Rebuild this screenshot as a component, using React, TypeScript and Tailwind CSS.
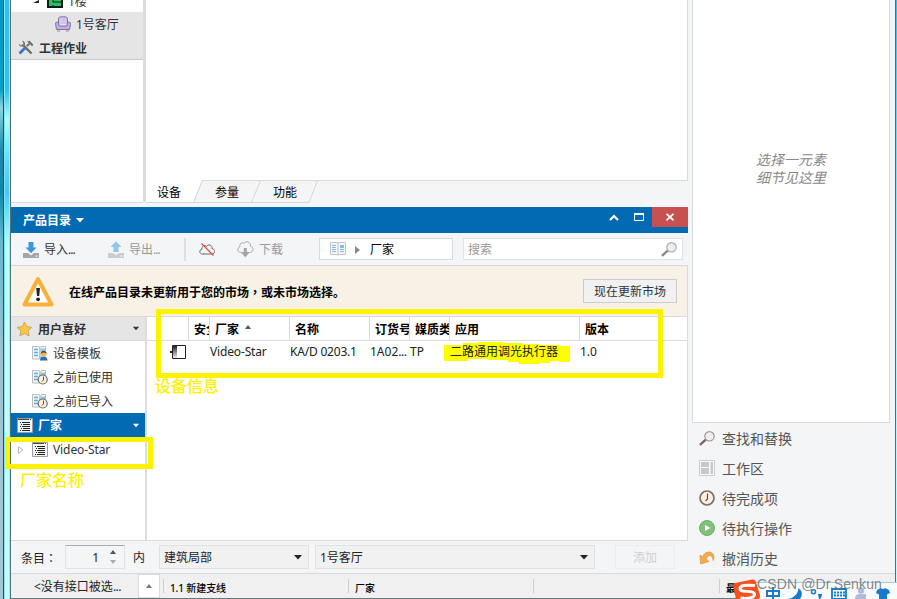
import React from 'react';

type P = { className?: string };

const Tri = ({ className = '' }: P) => (
  <svg width="8" height="5" viewBox="0 0 8 5" className={`shrink-0 ${className}`}>
    <path d="M0 0h8L4 4.6z" fill="currentColor" />
  </svg>
);

const Armchair = () => (
  <svg width="16" height="16" viewBox="0 0 16 16" className="shrink-0">
    <path d="M3.500 8V3Q3.500 .8 6 .8h4Q12.500 .8 12.500 3v5" fill="#cfc5ea" stroke="#8370ad" />
    <path d="M1.500 6Q.3 6.500.6 8.500L1.500 13.500h13l.9-5Q15.700 6.500 14.500 6q-2-.5-2.300 2L12 10H4l-.2-2Q3.500 5.500 1.500 6z" fill="#bfb2e0" stroke="#8370ad" />
    <path d="M2 14.500h3v1H2zM11 14.500h3v1h-3z" fill="#b98a63" />
  </svg>
);

const Tools = () => (
  <svg width="16" height="15" viewBox="0 0 16 15" className="shrink-0">
    <path d="M5 5l8.500 8.500" stroke="#6b6b6b" strokeWidth="2.400" />
    <path d="M.8 3.500L3 5.500 5.500 3.500 4 .8Q7.500 1 7 5L4.500 6.800Q1 6.800.8 3.500z" fill="#777" />
    <path d="M8.800 6.200L12 3" stroke="#777" strokeWidth="2" />
    <path d="M9 1.500L11.500.7l3.800 3.800-1.200 2L12 4z" fill="#6b6b6b" />
    <path d="M1.500 13.500L7 8" stroke="#3c78c4" strokeWidth="2.800" />
  </svg>
);

const Tray = ({ up = false }: { up?: boolean }) => (
  <svg width="16" height="17" viewBox="0 0 16 17" className={up ? 'shrink-0 opacity-50' : 'shrink-0'}>
    <path d="M0 12h5l3 2.500 3-2.500h5v5H0z" fill="#a5a5a5" />
    <path d="M12.500 14.500h2v1h-2z" fill="#fff" />
    {up ? <path d="M5.500 11V6H2.500L8 .3 13.500 6h-3v5z" fill="#3c96dc" /> : <path d="M5.500 1v5.500h-3L8 12.200l5.500-5.700h-3V1z" fill="#3c96dc" />}
  </svg>
);

const cloudPath = 'M4.500 12H3.500C.2 12-.2 7.800 3 7.200 2.500 3.500 6.500 2.500 7.500 4.500 9 1.500 13.500 3 13 6.700 16.500 7 16.300 12 13 12h-1.500';

const CloudOff = () => (
  <svg width="17" height="15" viewBox="0 0 17 15" className="shrink-0">
    <path d={cloudPath + 'H4'} fill="none" stroke="#666" />
    <path d="M2.500 1.500l12 12" stroke="#e64b42" strokeWidth="1.300" />
  </svg>
);

const CloudDown = () => (
  <svg width="17" height="17" viewBox="0 1 17 17" className="shrink-0">
    <path d="M4 12.500H3.500C.2 12.500-.2 7.300 3 6.700 2.500 2.500 5.500 2 7 3.500 8.500.5 14 1.500 13.500 6.200 17 6.500 16.800 12.500 13 12.500" fill="none" stroke="#aaa" />
    <path d="M6.800 8h3v4h3.200L8.300 17.300 3.600 12h3.200z" fill="#a5a5a5" />
  </svg>
);

const Book = () => (
  <svg width="16" height="14" viewBox="0 0 16 14" className="shrink-0">
    <path d="M.5.5h7L8 1.500l.5-1h7v12h-7l-.5 1-.5-1h-7z" fill="#f5f5f5" stroke="#c5c5c5" />
    <path d="M8 1v12" stroke="#c5c5c5" />
    <path d="M2 3.500h4M2 5.500h4M2 7.500h4M2 9.500h4M10 7.500h4M10 9.500h4" stroke="#79bfe9" />
    <path d="M10 3h4v3h-4z" fill="#79bfe9" />
  </svg>
);

const Lens = ({ brown = false }: { brown?: boolean }) => (
  <svg width="16" height="15" viewBox="0 0 16 15" className="shrink-0">
    <path d="M1 13.800L7 8.300" stroke={brown ? '#80695b' : '#8a8a8a'} strokeWidth="2.400" />
    <circle cx="10.500" cy="5.300" r="4.700" fill="#eceef0" stroke={brown ? '#a39891' : '#aaa'} strokeWidth="1.200" />
  </svg>
);

const Warning = () => (
  <svg width="32" height="31" viewBox="0 0 32 31" className="shrink-0">
    <path d="M16 3L29.500 28.500H2.500z" fill="#fff" stroke="#fbb03b" strokeWidth="4" strokeLinejoin="round" />
    <path d="M14.200 12h3.800l-.8 8h-2.200z" fill="#222" />
    <circle cx="16.100" cy="23.300" r="1.900" fill="#222" />
  </svg>
);

const Star = () => (
  <svg width="17" height="16" viewBox="0 0 17 16" className="shrink-0">
    <path d="M8.500 1l2.200 4.700 5.200.6-3.800 3.600 1 5.100-4.600-2.500L3.900 15l1-5.100L1.100 6.300l5.200-.6z" fill="#fcc644" stroke="#c9a15a" strokeWidth=".9" strokeLinejoin="round" />
  </svg>
);

const BookBase = () => (
  <>
    <path d="M.5.5h6L8 1.500l-.5 11.500H.5zM8 1.500L9 .5h4.500V7L8 12z" fill="#f3f5f7" stroke="#b6bcc2" />
    <path d="M2 3.500h4M2 6.500h4M2 9.500h4" stroke="#5baee0" strokeWidth="1.500" />
    <path d="M9 2.500h4V6H9z" fill="#8cc9ec" />
  </>
);

const BookUser = () => (
  <svg width="16" height="15" viewBox="0 0 16 15" className="shrink-0">
    <BookBase />
    <path d="M8 14.500q0-4 3.700-4t3.800 4z" fill="#2a6fb5" />
    <circle cx="11.700" cy="8.300" r="2.800" fill="#f0b95c" />
    <path d="M8.700 8q.3-3 3-3t3 3q-1-1.400-3-1.400t-3 1.400z" fill="#333" />
  </svg>
);

const BookClock = () => (
  <svg width="16" height="15" viewBox="0 0 16 15" className="shrink-0">
    <BookBase />
    <circle cx="10.700" cy="9.500" r="4.500" fill="#fbefdf" stroke="#75675e" strokeWidth="1.200" />
    <path d="M11.500 6.500v3.500l-1.500 1.500" fill="none" stroke="#555" />
  </svg>
);

const ListIcon = () => (
  <svg width="16" height="15" viewBox="0 0 16 15" className="shrink-0">
    <path d="M.5.5h15v14H.5z" fill="#f4f4f5" stroke="#9a9fa6" />
    <path d="M1 1.500h11M13 1.500h1" stroke="#444" />
    <path d="M3 4.500h1M5 4.500h8M4 6.500h1M6 6.500h7M3 8.500h1M5 8.500h8M4 10.500h1M6 10.500h7M3 12.500h1M5 12.500h8" stroke="#222" />
  </svg>
);

const Dimmer = () => (
  <svg width="16" height="14" viewBox="0 0 16 14" className="shrink-0">
    <defs>
      <linearGradient id="dim" x1="0" y1="0" x2="0" y2="1"><stop stopColor="#222" /><stop offset="1" stopColor="#eee" /></linearGradient>
    </defs>
    <path d="M2.500.5h13v13h-13z" fill="#fff" stroke="#222" />
    <path d="M3 1h4v12H3z" fill="url(#dim)" />
    <path d="M0 6h2v2H0z" fill="#222" />
  </svg>
);

const Layout = () => (
  <svg width="16" height="16" viewBox="0 0 16 16" className="shrink-0">
    <path d="M.5.5h15v15H.5z" fill="#fafafa" stroke="#ccc" />
    <path d="M2 2h8v5H2zM2 8h8v6H2zM11.500 2H14v12h-2.500z" fill="#c8c8c8" />
  </svg>
);

const Clock = () => (
  <svg width="16" height="16" viewBox="0 0 16 16" className="shrink-0">
    <circle cx="8" cy="8" r="7" fill="#fdf0df" stroke="#7f6f64" strokeWidth="1.700" />
    <path d="M8.500 3.500v5.500L6.500 11" fill="none" stroke="#555" strokeWidth="1.200" />
  </svg>
);

const Play = () => (
  <svg width="16" height="16" viewBox="0 0 16 16" className="shrink-0">
    <circle cx="8" cy="8" r="7.500" fill="#80c078" stroke="#70ad6a" />
    <path d="M6 5l5.500 3L6 11z" fill="#fff" />
  </svg>
);

const Undo = () => (
  <svg width="16" height="15" viewBox="0 0 16 15" className="shrink-0">
    <path d="M1 4l2.500 2Q5.500 1 10 1q5 .5 5 6l-.8 2.500Q13.500 4.500 10.500 4.500 8 4.700 7.300 8.300L10 10.500 1.500 13z" fill="#f5ad4c" stroke="#d79039" strokeWidth=".7" />
  </svg>
);

const TabLabel = ({ children, w }: { children: React.ReactNode; w: string }) => (
  <div className={`relative h-6 ${w} shrink-0 flex items-center justify-center text-black`}>{children}</div>
);

const Col = ({ w, children }: { w: string; children?: React.ReactNode }) => (
  <div className={`${w} pl-[5px] pt-0.5 h-full shrink-0 overflow-hidden whitespace-nowrap border-r border-[#d9dadc] flex items-center gap-1.5 font-bold text-black`}>{children}</div>
);

const SideRow = ({ icon, label }: { icon: React.ReactNode; label: string }) => (
  <div className="h-6 flex items-center pl-[21px] gap-[5px] text-[#333]">{icon}<span className="mt-0.5">{label}</span></div>
);

const Tool = ({ icon, label }: { icon: React.ReactNode; label: string }) => (
  <div className="h-[30px] flex items-center gap-[7px]">{icon}<span className="mt-px">{label}</span></div>
);

const VLine = ({ className = '' }: P) => <div className={`w-px h-[14px] shrink-0 bg-[#cfcfcf] ${className}`} />;

export default function App() {
  return (
    <div className="relative w-[897px] h-[599px] overflow-hidden flex bg-[#f4f5f7] text-[12px] leading-[16px] whitespace-nowrap text-[#333] font-['Noto_Sans','Noto_Sans_CJK_SC',sans-serif]">
      <div className="w-[11px] shrink-0 flex">
        <div className="w-[3px] bg-[linear-gradient(#0795c5_0%,#079fc5_15%,#8bd4df_18%,#2089b0_25%,#0e86b1_32%,#68b5d0_40%,#a4bfd1_60%,#a7c5d7_100%)]" />
        <div className="w-px bg-[#1c5363]" />
        <div className="w-px bg-[#83e6f8]" />
        <div className="w-[4px] bg-[linear-gradient(#2fc1ff_0%,#2fc1ff_15%,#b4fcff_20%,#62e0ff_26%,#3fc8fa_32%,#bffcff_41%,#c5fbfd_100%)]" />
        <div className="w-px bg-[#a3eaf4]" />
        <div className="w-px bg-[#4e7079]" />
      </div>

      <div className="w-[884px] shrink-0 flex flex-col">
        <div className="h-[573px] shrink-0 flex">
          <div className="w-[677px] shrink-0 flex flex-col">
            <div className="h-[207px] shrink-0 flex">
              <div className="w-[132px] h-[203px] shrink-0 overflow-hidden bg-white border-b border-[#d9dadc]">
                <div className="h-3 flex items-end pl-[21px]">
                  <svg width="7" height="12" viewBox="0 0 7 12" className="mr-2"><path d="M7 0v3H1z" fill="#222" /></svg>
                  <svg width="16" height="12" viewBox="0 0 16 12"><path d="M1-4h14V7H1z" fill="#31bd59" stroke="#101820" strokeWidth="2" /><path d="M6-3v5h9M6 5v3" fill="none" stroke="#123" /></svg>
                  <span className="ml-[5px] h-[18px] leading-[16px]">1楼</span>
                </div>
                <div className="bg-[#e5e5e5] border-b border-[#c9c9c9]">
                  <div className="h-6 flex items-center gap-[5px] pl-11"><Armchair /><span className="mt-0.5">1号客厅</span></div>
                  <div className="h-[23px] flex items-center gap-[5px] pl-[7px] font-bold"><Tools /><span className="mt-0.5">工程作业</span></div>
                </div>
              </div>
              <div className="w-[3px] h-[202px] shrink-0 bg-[#dcdcdc]" />
              <div className="w-[542px] shrink-0 flex flex-col">
                <div className="h-[181px] shrink-0 bg-white border-r border-b border-[#d9dadc]" />
                <div className="relative h-[23px] flex">
                  <svg width="200" height="23" className="absolute left-0 -top-px">
                    <path d="M0 0H56L47 22H0z" fill="#fff" />
                    <path d="M0 22.500H163L171.500.5M56.500.5L47.500 22.500M114.500.5L105.500 22.500" fill="none" stroke="#d5d7d9" />
                  </svg>
                  <TabLabel w="w-[46px]">设备</TabLabel>
                  <TabLabel w="w-[70px]">参量</TabLabel>
                  <TabLabel w="w-[46px]">功能</TabLabel>
                </div>
              </div>
            </div>

            <div className="h-[26px] shrink-0 bg-[#006ab3] text-white flex items-center pl-3">
              <span className="mt-0.5 font-bold">产品目录</span><Tri className="ml-[5px]" />
              <div className="ml-auto h-full flex items-start">
                <svg width="12" height="20" viewBox="0 0 12 20"><path d="M2 13l4-4 4 4" fill="none" stroke="#fff" strokeWidth="2.200" /></svg>
                <svg width="10" height="20" viewBox="0 0 10 20" className="ml-3.5"><path d="M.5 6.500h9v7h-9z" fill="none" stroke="#fff" /><path d="M0 6h10v2H0z" fill="#fff" /></svg>
                <div className="ml-2 w-9 h-5 bg-[#c75050] flex items-center justify-center">
                  <svg width="8" height="8" viewBox="0 0 8 8"><path d="M.5.8l7 6.500M7.500.8l-7 6.500" stroke="#fff" strokeWidth="1.700" /></svg>
                </div>
              </div>
            </div>

            <div className="h-8 shrink-0 flex items-center pl-3 text-[#999]">
              <div className="w-[85px] flex items-center gap-[5px] text-[#333]"><Tray /><span className="mt-0.5">导入<span className="tracking-[-1px]">...</span></span></div>
              <div className="w-[76px] flex items-center gap-[5px]"><Tray up /><span className="mt-0.5">导出<span className="tracking-[-1px]">...</span></span></div>
              <div className="w-0.5 h-[23px] bg-[#dfe0e2]" />
              <div className="ml-[13px] w-[38px]"><CloudOff /></div>
              <div className="w-[82px] flex items-center gap-[5px]"><CloudDown /><span className="mt-0.5">下载</span></div>
              <div className="w-[134px] h-[22px] shrink-0 bg-white border border-[#d9dadc] flex items-center pl-2.5 text-black">
                <Book />
                <svg width="5" height="8" viewBox="0 0 5 8" className="ml-[9px] mr-2.5 mt-0.5"><path d="M0 0l5 4-5 4z" fill="#888" /></svg>
                <span className="mt-0.5">厂家</span>
              </div>
              <div className="ml-2.5 w-[220px] h-[22px] shrink-0 bg-white border border-[#e2e3e5] flex items-center justify-between pl-1 pr-[5px]">
                <span className="mt-0.5">搜索</span><Lens />
              </div>
            </div>

            <div className="h-[52px] shrink-0 bg-[#f7f2e5] border border-l-0 border-[#d9dadc] flex items-center pl-[11px] pr-2.5">
              <Warning />
              <span className="mt-0.5 ml-[15px] font-bold text-black">在线产品目录未更新用于您的市场<span className="font-['Noto_Sans_CJK_TC']">，</span>或未市场选择。</span>
              <div className="ml-auto w-[94px] h-6 pt-0.5 bg-[#f1f1f1] border border-[#cbcccd] flex items-center justify-center">现在更新市场</div>
            </div>

            <div className="h-[224px] shrink-0 flex border-b border-[#d9dadc]">
              <div className="w-[134px] shrink-0 bg-white">
                <div className="h-[24px] bg-[#e5e5e5] border-b border-[#d9dadc] flex items-center pl-[5px] gap-1">
                  <Star /><span className="mt-0.5 ml-px font-bold">用户喜好</span><Tri className="ml-auto mr-[5px] scale-[0.85] text-[#333]" />
                </div>
                <SideRow icon={<BookUser />} label="设备模板" />
                <SideRow icon={<BookClock />} label="之前已使用" />
                <SideRow icon={<BookClock />} label="之前已导入" />
                <div className="h-6 bg-[#006ab3] text-white flex items-center pl-1.5 gap-[5px]">
                  <ListIcon /><span className="mt-0.5 font-bold">厂家</span><Tri className="ml-auto mr-[5px] scale-[0.85]" />
                </div>
                <div className="h-[25px] flex items-center pl-[7px]">
                  <svg width="6" height="8" viewBox="0 0 6 8"><path d="M.5.7L5 4 .5 7.300z" fill="#fff" stroke="#b5b5b5" /></svg>
                  <span className="ml-2"><ListIcon /></span><span className="ml-[5px] tracking-[-0.1px]">Video-Star</span>
                </div>
              </div>
              <div className="w-0.5 shrink-0 bg-[#dcdde0]" />
              <div className="w-[541px] shrink-0 bg-white border-r border-[#d9dadc]">
                <div className="h-6 flex items-center border-b border-[#d9dadc]">
                  <Col w="w-[42px]" />
                  <Col w="w-[21px]">安全</Col>
                  <Col w="w-[80px]">厂家<svg width="6" height="4" viewBox="0 0 6 4" className="mb-1.5"><path d="M3 0l3 4H0z" fill="#555" /></svg></Col>
                  <Col w="w-[80px]">名称</Col>
                  <Col w="w-[40px]">订货号</Col>
                  <Col w="w-[40px]">媒质类型</Col>
                  <Col w="w-[130px]">应用</Col>
                  <div className="pl-[5px] pt-0.5 font-bold text-black">版本</div>
                </div>
                <div className="relative h-[21px] flex items-center text-[#222]">
                  <svg width="127" height="26" className="absolute left-[296px] -top-px">
                    <path d="M1 5H20V3H35V2H60V3H80V4H96V5H116V6H127V22H116V21H107V23H97V24H76V22H65V20H45V19H25V21H1z" fill="#ffff00" />
                  </svg>
                  <div className="w-[63px] pl-[23px]"><Dimmer /></div>
                  <div className="w-[80px] tracking-[-0.15px]">Video-Star</div>
                  <div className="w-[80px] tracking-[-0.2px]">KA/D 0203.1</div>
                  <div className="w-[40px]">1A02<span className="tracking-[-0.5px]">...</span></div>
                  <div className="w-[40px]">TP</div>
                  <div className="relative w-[130px] text-[#222]">二路通用调光执行器</div>
                  <div>1.0</div>
                </div>
              </div>
            </div>

            <div className="h-8 shrink-0 flex items-center pl-2.5 text-[#222]">
              <span className="mt-0.5 w-11">条目<span className="font-['Noto_Sans_CJK_TC']">：</span></span>
              <div className="w-[60px] h-6 border border-[#e2e3e5] border-t-[#a7a9ac] flex items-center justify-end pr-[7px]">
                <span className="mt-0.5">1</span>
                <svg width="8" height="14" viewBox="0 0 8 14" className="ml-2.5"><path d="M4 0l3 4H1z" fill="#555" /><path d="M1 10h6l-3 4z" fill="#aaa" /></svg>
              </div>
              <span className="mt-0.5 ml-2 w-[26px]">内</span>
              <div className="w-[150px] h-6 shrink-0 bg-[#f1f1f1] border border-[#e0e1e3] flex items-center justify-between pl-1 pr-1.5"><span className="mt-0.5">建筑局部</span><Tri /></div>
              <div className="ml-1.5 w-[280px] h-6 shrink-0 bg-[#f1f1f1] border border-[#e0e1e3] flex items-center justify-between pl-1 pr-1.5"><span className="mt-0.5">1号客厅</span><Tri /></div>
              <div className="ml-5 w-[60px] h-6 pt-0.5 shrink-0 border border-[#ebecee] text-[#cfcfcf] flex items-center justify-center">添加</div>
            </div>
          </div>

          <div className="w-[207px] shrink-0 flex flex-col">
            <div className="ml-1 w-[198px] h-[423px] shrink-0 bg-white border border-t-0 border-[#d9dadc] flex flex-col items-center pt-[151px] text-[14px] leading-[18px] italic text-[#888]">
              <span>选择一元素</span><span>细节见这里</span>
            </div>
            <div className="pl-[11px] text-[14px] text-[#555]">
              <Tool icon={<Lens brown />} label="查找和替换" />
              <Tool icon={<Layout />} label="工作区" />
              <Tool icon={<Clock />} label="待完成项" />
              <Tool icon={<Play />} label="待执行操作" />
              <Tool icon={<Undo />} label="撤消历史" />
            </div>
          </div>
        </div>

        <div className="h-[26px] shrink-0 bg-[#f0f0f0] border-t border-t-[#d9dadc] border-b border-b-[#68777c] flex items-center text-[10px] text-black">
          <span className="mt-0.5 w-[127px] pl-[23px] text-[12px] text-[#222]">&lt;没有接口被选<span className="tracking-[-0.5px]">...</span></span>
          <div className="w-[22px] h-6 shrink-0 bg-white border border-[#dcdcdc] flex items-center justify-center">
            <svg width="6" height="4" viewBox="0 0 6 4"><path d="M3 0l3 4H0z" fill="#777" /></svg>
          </div>
          <VLine className="ml-[3px]" />
          <span className="mt-1 w-[184px] pl-1.5 font-medium tracking-[-0.1px]">1.1 新建支线</span>
          <VLine />
          <span className="mt-1 w-[184px] pl-1.5 font-medium">厂家</span>
          <VLine />
          <VLine className="ml-[185px]" />
          <span className="mt-1 pl-1.5 font-bold">最后</span>
        </div>
      </div>
      <div className="w-px shrink-0 bg-[#47717d]" />
      <div className="w-px shrink-0 bg-[linear-gradient(#35bdf0,#a7f5ff_45%,#c8fbff)]" />

      <div className="absolute left-[156px] top-[309px] w-[507px] h-[69px] border-[5px] border-[#fff200]" />
      <div className="absolute left-[5px] top-[437px] w-[148px] h-[32px] border-[5px] border-[#fff200]" />
      <span className="absolute left-[155px] top-[378px] text-[16px] font-medium text-[#fff200]">设备信息</span>
      <span className="absolute left-[20px] top-[472px] text-[16px] font-medium text-[#fff200]">厂家名称</span>

      <div className="absolute left-[748px] top-[582px] w-[149px] h-[17px] bg-[#f7fbfe] border-t border-[#a9cbe0]" />
      <svg width="165" height="20" viewBox="732 579 165 20" className="absolute left-[732px] top-[579px]">
        <path d="M733 585.500q0-2 2-2.500L752.500 579.500q2.500-.3 3 1.500L760 595q.5 2-1 4H736z" fill="#f4511e" />
        <path d="M755 585.500q-15-1.500-15 3.200c0 4.300 14.500 1 14.500 5.600 0 4-8 4.700-14 3.700" fill="none" stroke="#fff" strokeWidth="3" />
        <path d="M767 591h12v5h-12zM773 587v12" fill="none" stroke="#1979ca" strokeWidth="2" />
        <path d="M798.500 588q6 5 1.500 11h-12q10-2 10.500-11z" fill="#1979ca" />
        <circle cx="813.500" cy="591.800" r="2" fill="none" stroke="#1979ca" strokeWidth="1.500" />
        <path d="M818 594h4q0 4-3 5.500z" fill="#1979ca" />
        <path d="M832 589h14v10h-14z" fill="none" stroke="#1979ca" strokeWidth="1.800" />
        <path d="M834 592.500h11M834 595.500h11" stroke="#1979ca" strokeWidth="1.800" strokeDasharray="2 1" />
        <circle cx="861" cy="590.500" r="3.200" fill="#b0bcd5" />
        <path d="M855 599q0-5 5-5h6v5z" fill="#b0bcd5" />
        <path d="M877 590l4-2q2 2 4 0l4 2 1 3-3 1.500V599h-8v-4.500l-3-1.500z" fill="#1979ca" />
      </svg>
      <span className="absolute left-[757px] top-[576px] text-[14px] tracking-[0.12px] text-[#777]/90 font-['Liberation_Sans',sans-serif]">CSDN @Dr.Senkun</span>
    </div>
  );
}
